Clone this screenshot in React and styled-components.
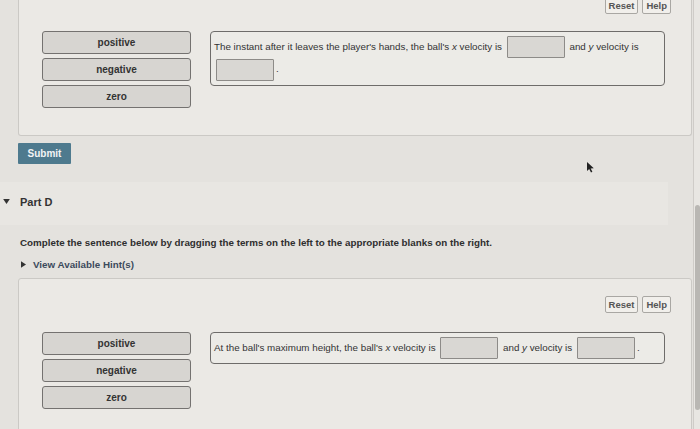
import styled, { createGlobalStyle } from "styled-components"

const Global = createGlobalStyle`
    html, body {
        margin: 0;
        padding: 0;
        background: #e4e2de;
        font-family: "Liberation Sans", Arial, sans-serif;
    }

    #root {
        height: 429px;
        overflow: hidden;
    }
`

const terms = ["positive", "negative", "zero"]

const Question = ({ children, top }) => (
    <Panel $top={top}>
        <Toolbar>
            <SmallButton>Reset</SmallButton>
            <SmallButton>Help</SmallButton>
        </Toolbar>
        <Row $top={top}>
            <Terms>
                {terms.map((t) => (
                    <Term key={t}>{t}</Term>
                ))}
            </Terms>
            <Sentence>{children}</Sentence>
        </Row>
    </Panel>
)

const App = () => {
    return (
        <Page>
            <Global />
            <Content>
                <Question top>
                    The instant after it leaves the player's hands, the ball's <i>x</i> velocity is <Blank /> and <i>y</i> velocity is <Blank />.
                </Question>

                <Submit>Submit</Submit>

                <PartHeader>
                    <Caret viewBox="0 0 8 6">
                        <path d="M0 0 L8 0 L4 6 Z" fill="#333" />
                    </Caret>
                    Part D
                </PartHeader>

                <Instruction>Complete the sentence below by dragging the terms on the left to the appropriate blanks on the right.</Instruction>

                <Hint>
                    <Caret viewBox="0 0 6 8" $small>
                        <path d="M0 0 L6 4 L0 8 Z" fill="#333" />
                    </Caret>
                    View Available Hint(s)
                </Hint>

                <Question>
                    At the ball's maximum height, the ball's <i>x</i> velocity is <Blank /> and <i>y</i> velocity is <Blank />.
                </Question>

                <Cursor viewBox="0 0 8 11">
                    <path d="M0 0 L0 9 L2.2 7 L4 10.5 L5.4 9.8 L3.7 6.5 L6.8 6.3 Z" fill="#222" />
                </Cursor>
            </Content>
            <Scrollbar>
                <Thumb />
            </Scrollbar>
        </Page>
    )
}

const Page = styled.div`
    display: flex;
    height: 429px;
`

const Content = styled.div`
    position: relative;
    width: 693px;
`

const Scrollbar = styled.div`
    width: 7px;
    background: #e8e6e2;
    border-left: 1px solid #cfccc8;
    padding-top: 205px;
    box-sizing: border-box;
`

const Thumb = styled.div`
    width: 5px;
    height: 205px;
    margin-left: 1px;
    background: #b9b7b3;
    border-radius: 3px;
`

const Panel = styled.div`
    margin-left: 18px;
    margin-top: ${(p) => (p.$top ? "-3px" : "0")};
    width: 674px;
    box-sizing: border-box;
    background: #ebe9e5;
    border: 1px solid #cbc9c5;
    border-top: ${(p) => (p.$top ? "none" : "1px solid #cbc9c5")};
    border-radius: ${(p) => (p.$top ? "0 0 3px 3px" : "3px 3px 0 0")};
    height: ${(p) => (p.$top ? "139px" : "160px")};
    padding-top: ${(p) => (p.$top ? "0" : "17px")};
`

const Toolbar = styled.div`
    display: flex;
    justify-content: flex-end;
    gap: 4px;
    padding-right: 20px;
`

const SmallButton = styled.div`
    height: 15px;
    line-height: 15px;
    padding: 0 3px;
    border: 1px solid #a9a7a3;
    border-radius: 2px;
    background: #f1efeb;
    color: #555;
    font-size: 9.5px;
    font-weight: bold;
`

const Row = styled.div`
    display: flex;
    gap: 19px;
    padding-left: 23px;
    margin-top: ${(p) => (p.$top ? "17px" : "19px")};
`

const Terms = styled.div`
    display: flex;
    flex-direction: column;
    gap: 4px;
    width: 149px;
`

const Term = styled.div`
    height: 21px;
    line-height: 21px;
    border: 1px solid #747270;
    border-radius: 3px;
    background: #d7d5d1;
    text-align: center;
    color: #333;
    font-size: 10px;
    font-weight: bold;
`

const Sentence = styled.div`
    width: 455px;
    box-sizing: border-box;
    align-self: flex-start;
    padding: 4px 3px;
    border: 1.5px solid #6e6c6a;
    border-radius: 4px;
    background: #ecebe7;
    color: #333;
    font-size: 9.8px;
    line-height: 21px;

    i {
        font-style: italic;
    }
`

const Blank = styled.span`
    display: inline-block;
    width: 56px;
    height: 20px;
    vertical-align: middle;
    margin: 0 2px;
    border: 1px solid #8d8b88;
    border-radius: 1px;
    background: #d9d7d3;
`

const Submit = styled.div`
    margin: 7px 0 0 18px;
    width: 53px;
    height: 21px;
    line-height: 21px;
    text-align: center;
    background: #4e7a8e;
    color: #f2f4f5;
    font-size: 10px;
    font-weight: bold;
    border-radius: 1px;
`

const PartHeader = styled.div`
    display: flex;
    align-items: center;
    gap: 10px;
    margin-top: 18px;
    height: 43px;
    width: 668px;
    padding-left: 3px;
    padding-bottom: 4px;
    box-sizing: border-box;
    color: #333;
    font-size: 11px;
    font-weight: bold;
    background: #e8e6e2;
`

const Caret = styled.svg`
    width: ${(p) => (p.$small ? "5px" : "7px")};
    height: ${(p) => (p.$small ? "7px" : "5px")};
    flex-shrink: 0;
`

const Instruction = styled.div`
    margin: 12px 0 0 20px;
    color: #2e2e2e;
    font-size: 9.8px;
    font-weight: bold;
`

const Hint = styled.div`
    display: flex;
    align-items: center;
    gap: 7px;
    margin: 10px 0 8px 21px;
    height: 12px;
    color: #3c4a5c;
    font-size: 9.8px;
    font-weight: bold;
`

const Cursor = styled.svg`
    position: absolute;
    left: 587px;
    top: 162px;
    width: 8px;
    height: 11px;
`

export default App
